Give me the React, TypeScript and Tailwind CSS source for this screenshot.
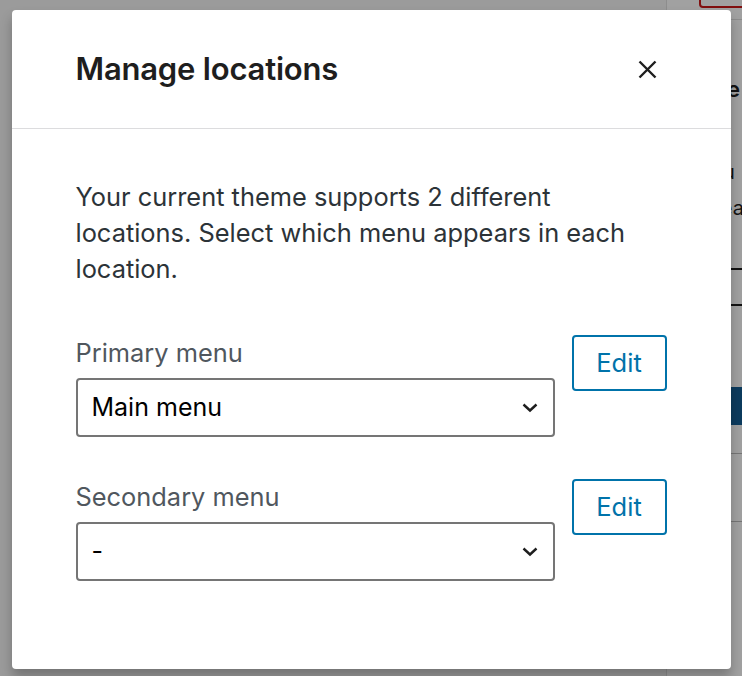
import type { ReactNode } from "react";

function Chevron() {
  return (
    <svg width="16" height="10" viewBox="0 0 16 10" fill="none" className="shrink-0">
      <path d="M1.5 1.5L8 7.5L14.5 1.5" stroke="#1e1e1e" strokeWidth="2.4" />
    </svg>
  );
}

function CloseIcon() {
  return (
    <svg width="19" height="19" viewBox="0 0 19 19" fill="none">
      <path d="M1.5 1.5L17.5 17.5M17.5 1.5L1.5 17.5" stroke="#1e1e1e" strokeWidth="2.4" />
    </svg>
  );
}

function LocationRow({ label, value }: { label: string; value: ReactNode }) {
  return (
    <div className="flex items-start gap-[17px]">
      <div className="w-[479px]">
        <div className="text-[25.4px] leading-[36px] text-[#50575e]">{label}</div>
        <div className="mt-[7px] flex h-[59px] items-center justify-between rounded-[4px] border-2 border-[#757575] pl-[14px] pr-[15px]">
          <span className="text-[25px] text-[#000]">{value}</span>
          <Chevron />
        </div>
      </div>
      <button className="flex h-[56px] w-[95px] items-center justify-center rounded-[4px] border-2 border-[#0073aa] text-[25.5px] text-[#0073aa]">
        Edit
      </button>
    </div>
  );
}

export default function App() {
  return (
    <div className="relative h-[676px] w-[742px] overflow-hidden font-['Inter',sans-serif]">
      {/* editor behind the modal */}
      <div className="flex h-full">
        <div className="w-[666px] shrink-0 bg-[#f6f6f6]" />
        <aside className="flex-1 border-l border-[#e0e0e0] bg-white">
          <div className="h-[40px] border-b border-[#e0e0e0] pl-[32px]">
            <div className="-mt-[20px] h-[28px] w-[160px] rounded-[4px] border-2 border-[#cc1818]" />
          </div>
          <div className="pl-[32px] pr-[5px]">
            <div className="mt-[53px] whitespace-nowrap text-[22px] font-semibold text-[#1e1e1e]">The</div>
            <div className="mt-[48px] whitespace-nowrap text-[20px] leading-[36px] text-[#1e1e1e]">
              <div>You</div>
              <div>Crea</div>
            </div>
            <div className="mt-[42px] h-[38px] rounded-[4px] border-2 border-[#1e1e1e]" />
            <div className="mt-[18px] whitespace-nowrap text-[20px] text-[#50575e]">For</div>
            <div className="mt-[33px] h-[38px] rounded-[4px] bg-[#135e96]" />
          </div>
          <div className="mt-[28px] h-[69px] border-y border-[#1e1e1e]/30" />
        </aside>
      </div>

      {/* overlay + modal */}
      <div className="absolute inset-0 flex justify-center bg-[rgba(0,0,0,0.37)] pt-[10px]">
        <div className="h-[659px] w-[719px] rounded-[4px] bg-white shadow-[0_8px_12px_rgba(0,0,0,0.25)]">
          <div className="flex h-[119px] items-center justify-between border-b border-[#dcdcde] pl-[64px] pr-[64px]">
            <h1 className="text-[31px] font-semibold tracking-[-0.2px] text-[#1e1e1e]">Manage locations</h1>
            <button className="flex h-[38px] w-[38px] items-center justify-center">
              <CloseIcon />
            </button>
          </div>

          <div className="px-[64px] pt-[50px]">
            <p className="text-[25.4px] leading-[36px] text-[#2c3338]">
              Your current theme supports 2 different locations. Select which menu appears in each location.
            </p>
            <div className="mt-[48px] flex flex-col gap-[42px]">
              <LocationRow label="Primary menu" value="Main menu" />
              <LocationRow label="Secondary menu" value="-" />
            </div>
          </div>
        </div>
      </div>
    </div>
  );
}
